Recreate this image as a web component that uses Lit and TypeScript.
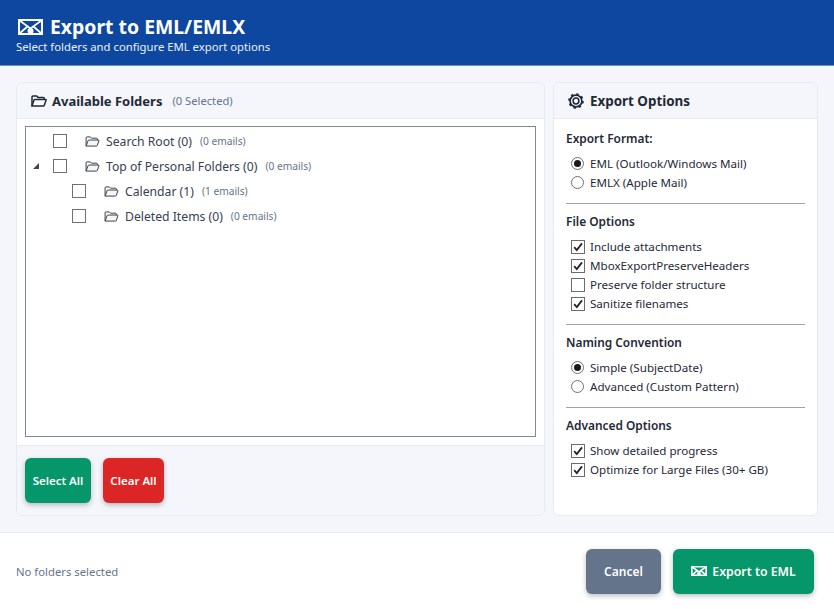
import { LitElement, html, css } from "lit";
import { customElement } from "lit/decorators.js";

const mail = (cls: string) => html`<svg class=${cls} viewBox="0 0 25 16" fill="none" stroke="currentColor">
  <rect x="1" y="1" width="23" height="14" stroke-width="2"></rect>
  <path d="M1.5 1.5 L12.5 9.5 L23.5 1.5 M1.5 14.5 L9.5 7.5 M23.5 14.5 L15.5 7.5" stroke-width="1.7"></path>
  <circle cx="12.5" cy="12" r="3" fill="currentColor" stroke="none"></circle>
</svg>`;

const folder = (cls: string) => html`<svg class=${cls} viewBox="0 0 16 12" fill="none">
  <path d="M1 11 V2 Q1 1 2 1 H5.6 L7 2.4 H12.4 Q13.3 2.4 13.3 3.4 V4.4" stroke="#2f2f2f" stroke-width="1"></path>
  <path d="M1 11 L3.2 5 Q3.4 4.4 4 4.4 H14.3 Q15.3 4.4 15 5.2 L13.2 10.4 Q13 11 12.2 11 Z" fill="#f2f7fd" stroke="#2f2f2f" stroke-width="1"></path>
</svg>`;

const hfolder = html`<svg class="hfolder" viewBox="0 0 16 12" fill="none">
  <path d="M1 11 V2 Q1 1 2 1 H5.6 L7 2.4 H12.4 Q13.3 2.4 13.3 3.4 V4.4" stroke="#1f2937" stroke-width="1.5"></path>
  <path d="M1 11 L3 5 Q3.2 4.4 4 4.4 H14.3 Q15.3 4.4 15 5.2 L13.2 10.4 Q13 11 12.2 11 Z" fill="#fff" stroke="#1f2937" stroke-width="1.5"></path>
</svg>`;

const gear = html`<svg class="gear" viewBox="0 0 16 16" fill="none" stroke="#1f2937">
  <circle cx="8" cy="8" r="5.9" stroke-width="1.7"></circle>
  <circle cx="8" cy="8" r="2.9" stroke-width="1.5"></circle>
  <circle cx="8" cy="8" r="7" stroke-width="1.6" stroke-dasharray="2.5 3"></circle>
</svg>`;

const check = html`<svg viewBox="0 0 12 12" fill="none"><path d="M2.2 6.2 L4.8 9 L10 2.4" stroke="#222" stroke-width="1.8"></path></svg>`;

@customElement("app-root")
export class AppRoot extends LitElement {
  static styles = css`
    :host {
      display: flex;
      flex-direction: column;
      width: 834px;
      height: 609px;
      background: #f4f6fb;
      font-family: "Noto Sans", "Open Sans", sans-serif;
      color: #1f2937;
      overflow: hidden;
    }
    .header {
      height: 66px;
      box-sizing: border-box;
      background: #0e479f;
      color: #fff;
      padding: 14px 16px 0;
      border-bottom: 1px solid #6d8fc5;
    }
    .title {
      display: flex;
      align-items: center;
      gap: 7px;
      font-size: 19.4px;
      font-weight: 700;
      line-height: 26px;
      padding-left: 2px;
    }
    .hmail { width: 25px; height: 16px; color: #fff; }
    .sub { font-size: 11.3px; line-height: 13px; color: #eaf0fa; }
    .main {
      flex: 1;
      display: flex;
      gap: 8px;
      padding: 16px;
      min-height: 0;
    }
    .card {
      background: #fff;
      border: 1px solid #e6eaf2;
      border-radius: 6px;
      display: flex;
      flex-direction: column;
      overflow: hidden;
      box-sizing: border-box;
    }
    .left { width: 529px; }
    .right { width: 265px; }
    .card-head {
      height: 36px;
      box-sizing: border-box;
      background: #f4f6fb;
      border-bottom: 1px solid #e6eaf2;
      display: flex;
      align-items: center;
      gap: 5px;
      padding: 0 14px;
      font-size: 13px;
      font-weight: 700;
      color: #1f2937;
    }
    .right .card-head { font-size: 13.4px; }
    .hfolder { width: 16px; height: 12px; }
    .count { font-size: 11.2px; font-weight: 400; color: #64748b; margin-left: 5px; }
    .gear { width: 16px; height: 16px; margin-right: 1px; }
    .tree-wrap { flex: 1; padding: 7px 8px 8px; min-height: 0; display: flex; }
    .tree {
      flex: 1;
      border: 1px solid #828790;
      padding: 1.5px 0 0;
      box-sizing: border-box;
    }
    .row {
      display: flex;
      align-items: center;
      height: 25px;
      font-size: 12.2px;
      color: #374151;
    }
    .row.l1 { padding-left: 46px; }
    .row.l0 { padding-left: 27px; }
    .arrow { width: 0; height: 0; position: relative; }
    .tri {
      width: 0; height: 0;
      border-style: solid;
      border-width: 0 0 6px 6px;
      border-color: transparent transparent #444 transparent;
      margin-left: -20px;
      display: block;
      position: relative;
      top: -3px;
    }
    .box {
      width: 12px; height: 12px;
      border: 1px solid #707070;
      background: #fff;
      flex: none;
      margin-bottom: 1px;
    }
    .tfolder { width: 15px; height: 11px; margin: 0 6px 0 18px; flex: none; }
    .em { font-size: 10.2px; color: #64748b; margin-left: 8px; }
    .actions {
      height: 70px;
      box-sizing: border-box;
      background: #f4f6fb;
      border-top: 1px solid #e6eaf2;
      padding: 12px 8px;
      display: flex;
      gap: 12px;
      align-items: flex-start;
    }
    .btn {
      border: none;
      border-radius: 6px;
      color: #fff;
      font-family: inherit;
      font-weight: 600;
      font-size: 11.5px;
      height: 45px;
      box-shadow: 0 2px 5px rgba(30, 41, 59, 0.3);
      padding: 0;
      display: flex;
      align-items: center;
      justify-content: center;
      gap: 5px;
    }
    .green { background: #059669; }
    .red { background: #dc2626; }
    .gray { background: #64748b; }
    .sa { width: 66px; }
    .ca { width: 61px; }
    .opts { padding: 0 12px; display: flex; flex-direction: column; }
    .sec { padding: 10px 0 11px; border-bottom: 1px solid #a3a3a3; }
    .sec:first-child { padding-top: 12px; }
    .sec:last-child { border-bottom: none; }
    .sec-t { font-size: 11.9px; font-weight: 600; color: #1f2937; line-height: 14px; margin-bottom: 9px; }
    .opt {
      display: flex;
      align-items: center;
      height: 19px;
      font-size: 11.6px;
      color: #1f2937;
      padding-left: 5px;
    }
    .radio {
      width: 11px; height: 11px;
      border: 1px solid #707070;
      border-radius: 50%;
      margin-right: 6px;
      background: #fff;
      flex: none;
      position: relative;
    }
    .radio.on::after {
      content: "";
      position: absolute;
      inset: 2px;
      border-radius: 50%;
      background: #1a1a1a;
    }
    .cb {
      width: 12px; height: 12px;
      border: 1px solid #6b6b6b;
      margin-right: 5px;
      background: #fff;
      flex: none;
      display: flex;
    }
    .cb svg { width: 12px; height: 12px; }
    .footer {
      height: 77px;
      box-sizing: border-box;
      background: #fff;
      border-top: 1px solid #e2e8f0;
      display: flex;
      align-items: center;
      padding: 0 20px 0 16px;
      gap: 12px;
    }
    .status { flex: 1; font-size: 11.3px; color: #64748b; }
    .cancel { width: 75px; font-size: 12px; }
    .export { width: 141px; font-size: 12.3px; }
    .fmail { width: 16px; height: 10px; color: #fff; }
    .fmail rect { stroke-width: 2.8; }
    .fmail path { stroke-width: 2.6; }
  `;

  private row(level: number, name: string, em: string, expand = false) {
    return html`<div class="row l${level}">
      ${expand ? html`<span class="arrow"><i class="tri"></i></span>` : ""}
      <span class="box"></span>${folder("tfolder")}<span>${name}</span><span class="em">${em}</span>
    </div>`;
  }

  private cb(label: string, on: boolean) {
    return html`<div class="opt"><span class="cb">${on ? check : ""}</span>${label}</div>`;
  }

  private radio(label: string, on: boolean) {
    return html`<div class="opt"><span class="radio ${on ? "on" : ""}"></span>${label}</div>`;
  }

  render() {
    return html`
      <div class="header">
        <div class="title">${mail("hmail")}<span>Export to EML/EMLX</span></div>
        <div class="sub">Select folders and configure EML export options</div>
      </div>
      <div class="main">
        <div class="card left">
          <div class="card-head">${hfolder}<span>Available Folders</span><span class="count">(0 Selected)</span></div>
          <div class="tree-wrap">
            <div class="tree">
              ${this.row(0, "Search Root (0)", "(0 emails)")}
              ${this.row(0, "Top of Personal Folders (0)", "(0 emails)", true)}
              ${this.row(1, "Calendar (1)", "(1 emails)")}
              ${this.row(1, "Deleted Items (0)", "(0 emails)")}
            </div>
          </div>
          <div class="actions">
            <button class="btn green sa">Select All</button>
            <button class="btn red ca">Clear All</button>
          </div>
        </div>
        <div class="card right">
          <div class="card-head">${gear}<span>Export Options</span></div>
          <div class="opts">
            <div class="sec">
              <div class="sec-t">Export Format:</div>
              ${this.radio("EML (Outlook/Windows Mail)", true)}
              ${this.radio("EMLX (Apple Mail)", false)}
            </div>
            <div class="sec">
              <div class="sec-t">File Options</div>
              ${this.cb("Include attachments", true)}
              ${this.cb("MboxExportPreserveHeaders", true)}
              ${this.cb("Preserve folder structure", false)}
              ${this.cb("Sanitize filenames", true)}
            </div>
            <div class="sec">
              <div class="sec-t">Naming Convention</div>
              ${this.radio("Simple (SubjectDate)", true)}
              ${this.radio("Advanced (Custom Pattern)", false)}
            </div>
            <div class="sec">
              <div class="sec-t">Advanced Options</div>
              ${this.cb("Show detailed progress", true)}
              ${this.cb("Optimize for Large Files (30+ GB)", true)}
            </div>
          </div>
        </div>
      </div>
      <div class="footer">
        <div class="status">No folders selected</div>
        <button class="btn gray cancel">Cancel</button>
        <button class="btn green export">${mail("fmail")}Export to EML</button>
      </div>
    `;
  }
}
